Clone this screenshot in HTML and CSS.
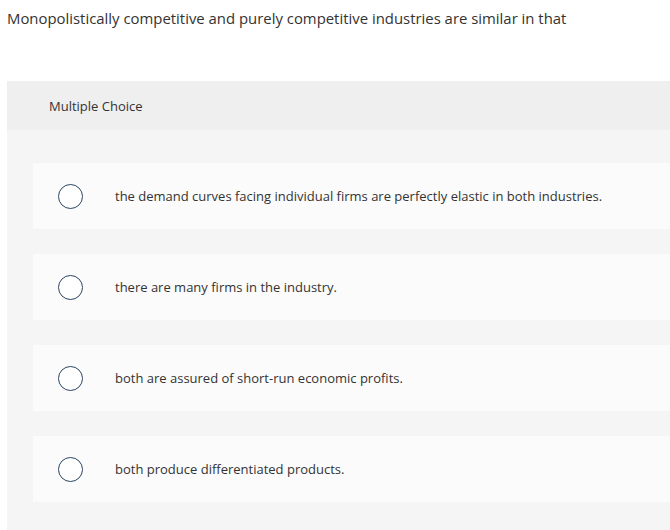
FILE: index.html
```html
<!DOCTYPE html>
<html>
<head>
<meta charset="utf-8">
<link rel="stylesheet" href="styles.css">
</head>
<body>
<p class="question">Monopolistically competitive and purely competitive industries are similar in that</p>
<section class="mc">
  <div class="mc-header">Multiple Choice</div>
  <div class="mc-body">
    <div class="option"><span class="radio"></span><span class="label">the demand curves facing individual firms are perfectly elastic in both industries.</span></div>
    <div class="option"><span class="radio"></span><span class="label">there are many firms in the industry.</span></div>
    <div class="option"><span class="radio"></span><span class="label">both are assured of short-run economic profits.</span></div>
    <div class="option"><span class="radio"></span><span class="label">both produce differentiated products.</span></div>
  </div>
</section>
</body>
</html>
```
FILE: styles.css
```css
html, body {
  margin: 0;
  padding: 0;
  background: #ffffff;
}
body {
  font-family: "Open Sans", "Lato", sans-serif;
  color: #333333;
  font-variant-ligatures: none;
}
.question {
  margin: 0;
  padding: 9px 0 0 7px;
  height: 72px;
  font-size: 14.9px;
  line-height: 18px;
  color: #333;
}
.mc {
  margin-left: 7px;
}
.mc-header {
  height: 49px;
  background: #efefef;
  display: flex;
  align-items: center;
  padding-left: 42px;
  font-size: 13px;
  color: #333;
}
.mc-body {
  background: #f5f5f5;
  padding: 33px 0 28px 26px;
  display: flex;
  flex-direction: column;
  gap: 25px;
}
.option {
  height: 66px;
  background: #fbfbfb;
  display: flex;
  align-items: center;
  padding-left: 25px;
}
.radio {
  width: 23px;
  height: 23px;
  border: 1.5px solid #2b4560;
  border-radius: 50%;
  background: #fff;
  flex: none;
}
.label {
  margin-left: 32px;
  font-size: 13px;
  color: #333;
}
```
